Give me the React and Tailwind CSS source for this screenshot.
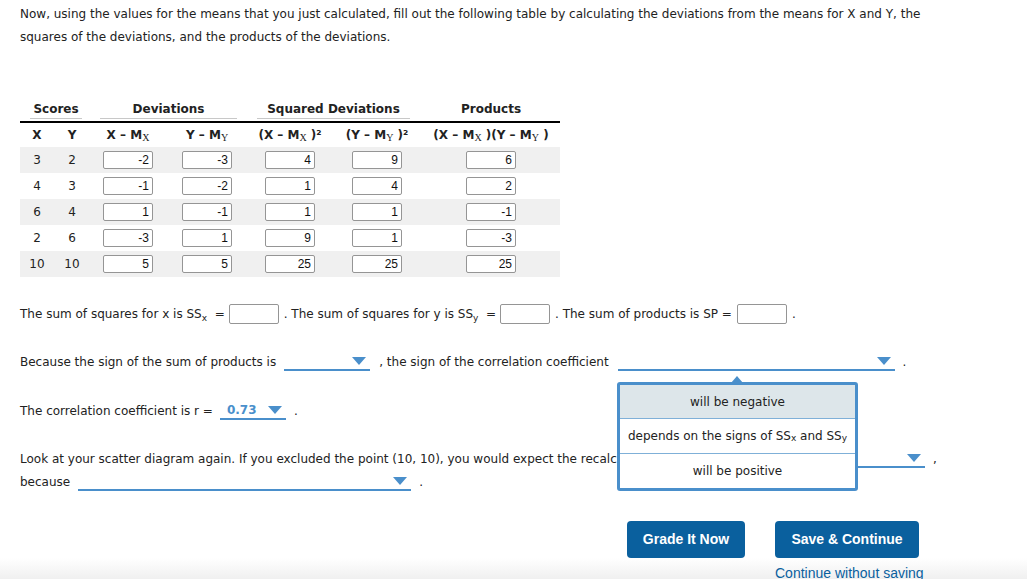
// Correlation worksheet - deviations table with dropdown answers

const BLUE = 'border-[#4a8fcb]';

const rows = [
  { x: 3, y: 2, dx: '-2', dy: '-3', sx: '4', sy: '9', p: '6' },
  { x: 4, y: 3, dx: '-1', dy: '-2', sx: '1', sy: '4', p: '2' },
  { x: 6, y: 4, dx: '1', dy: '-1', sx: '1', sy: '1', p: '-1' },
  { x: 2, y: 6, dx: '-3', dy: '1', sx: '9', sy: '1', p: '-3' },
  { x: 10, y: 10, dx: '5', dy: '5', sx: '25', sy: '25', p: '25' },
];

const GRID = 'grid grid-cols-[34px_36px_76px_82px_84px_90px_138px] w-[540px]';

function Arrow() {
  return (
    <svg width="14" height="8" viewBox="0 0 14 8" className="absolute right-[4px] top-1/2 -translate-y-1/2">
      <polygon points="0,0 14,0 7,8" fill="#4a8fcb" />
    </svg>
  );
}

function Drop({ className = '', children }) {
  return (
    <span className={`relative flex h-full items-center border-b-2 ${BLUE} ${className}`}>
      {children}
      <Arrow />
    </span>
  );
}

function Box({ value = '', className = '' }) {
  return (
    <input
      readOnly
      value={value}
      className={`h-[18px] w-[50px] rounded-[2px] border border-[#959595] bg-white pr-[3px] text-right font-['Liberation_Sans',Arial,sans-serif] text-[12px] text-[#111] outline-none ${className}`}
    />
  );
}

function MSub({ v }) {
  return (
    <>
      M<span className="relative top-[2px] font-['Liberation_Serif',serif] text-[10px] font-normal">{v}</span>
    </>
  );
}

function Sub({ v }) {
  return <span className="relative top-[3px] text-[9px]">{v}</span>;
}

export default function App() {
  return (
    <div className="relative flex h-[579px] w-[1027px] flex-col overflow-hidden bg-white font-['DejaVu_Sans',Verdana,sans-serif] text-[12px] text-[#222]">
      <div className="flex flex-col px-[20px] pt-[3px]">
        {/* Intro */}
        <p className="leading-[23px]">
          <span className="block whitespace-nowrap">
            Now, using the values for the means that you just calculated, fill out the following table by calculating the deviations from the means for X and Y, the
          </span>
          <span className="block whitespace-nowrap">squares of the deviations, and the products of the deviations.</span>
        </p>

        {/* Table */}
        <div className="mt-[50px] flex flex-col">
          <div className={GRID}>
            <div className="col-span-2 ml-[10px] mr-[8px] flex h-[20px] items-center justify-center border-b border-[#c8c8c8] font-bold">Scores</div>
            <div className="col-span-2 ml-[10px] mr-[11px] flex h-[20px] items-center justify-center border-b border-[#c8c8c8] font-bold">Deviations</div>
            <div className="col-span-2 ml-[9px] mr-[12px] flex h-[20px] items-center justify-center border-b border-[#c8c8c8] font-bold">Squared Deviations</div>
            <div className="flex h-[20px] items-center justify-center font-bold">Products</div>
          </div>
          <div className="mt-[2px] h-[2px] w-[540px] bg-black" />
          <div className={`${GRID} h-[24px] items-center text-center font-bold whitespace-nowrap`}>
            <div>X</div>
            <div>Y</div>
            <div>X – <MSub v="X" /></div>
            <div>Y – <MSub v="Y" /></div>
            <div>(X – <MSub v="X" /> )²</div>
            <div>(Y – <MSub v="Y" /> )²</div>
            <div>(X – <MSub v="X" /> )(Y – <MSub v="Y" /> )</div>
          </div>
          {rows.map((r, i) => (
            <div key={i} className={`${GRID} h-[26px] items-center text-center ${i % 2 === 0 ? 'bg-[#f0f0f0]' : 'bg-white'}`}>
              <div>{r.x}</div>
              <div>{r.y}</div>
              <div className="flex justify-center"><Box value={r.dx} /></div>
              <div className="flex justify-center"><Box value={r.dy} /></div>
              <div className="flex justify-center"><Box value={r.sx} /></div>
              <div className="flex justify-center"><Box value={r.sy} /></div>
              <div className="flex justify-center"><Box value={r.p} /></div>
            </div>
          ))}
        </div>

        {/* Sums */}
        <div className="mt-[27px] flex h-[20px] items-center whitespace-nowrap">
          <span>The sum of squares for x is SS<Sub v="x" /> &nbsp;=</span>
          <Box className="ml-[4px] h-[20px]" />
          <span className="ml-[5px]">. The sum of squares for y is SS<Sub v="y" /> &nbsp;=</span>
          <Box className="ml-[4px] h-[20px]" />
          <span className="ml-[5px]">. The sum of products is SP =</span>
          <Box className="ml-[5px] h-[20px]" />
          <span className="ml-[5px]">.</span>
        </div>

        {/* Sign questions */}
        <div className="mt-[29px] flex h-[18px] items-center whitespace-nowrap">
          <span>Because the sign of the sum of products is</span>
          <Drop className="ml-[8px] w-[86px]" />
          <span className="ml-[9px]">, the sign of the correlation coefficient</span>
          <Drop className="ml-[9px] w-[277px]" />
          <span className="ml-[8px]">.</span>
        </div>

        <div className="mt-[30px] flex h-[19px] items-center whitespace-nowrap">
          <span>The correlation coefficient is r =</span>
          <Drop className="ml-[7px] w-[66px]">
            <span className="ml-[7px] font-bold text-[#4a8fcb]">0.73</span>
          </Drop>
          <span className="ml-[8px]">.</span>
        </div>

        <div className="mt-[30px] flex h-[18px] items-center whitespace-nowrap">
          <div className="flex h-full w-[905px] items-center">
            <span className="shrink-0">
              Look at your scatter diagram again. If you excluded the point (10, 10), you would expect the recalculated correlation coefficient
            </span>
            <Drop className="ml-[8px] flex-1" />
          </div>
          <span className="ml-[8px]">,</span>
        </div>

        <div className="mt-[5px] flex h-[18px] items-center whitespace-nowrap">
          <span>because</span>
          <Drop className="ml-[8px] w-[333px]" />
          <span className="ml-[8px]">.</span>
        </div>

        {/* Actions */}
        <div className="ml-[607px] mt-[30px] flex gap-[30px] font-['Liberation_Sans',Arial,sans-serif]">
          <button className="flex h-[37px] w-[118px] items-center justify-center rounded-[4px] bg-[#0a609e] text-[14px] font-bold text-white">
            Grade It Now
          </button>
          <button className="flex h-[37px] w-[144px] items-center justify-center rounded-[4px] bg-[#0a609e] text-[14px] font-bold text-white">
            Save &amp; Continue
          </button>
        </div>
      </div>

      <div className="flex h-[22px] w-full bg-linear-to-b from-white to-[#efefef] pl-[775px] pt-[7px] font-['Liberation_Sans',Arial,sans-serif] text-[14px] leading-[16px] text-[#0a609e]">
        Continue without saving
      </div>

      {/* Open dropdown menu */}
      <div className={`absolute left-[617px] top-[382px] w-[241px] rounded-[3px] border-[3px] ${BLUE} bg-white`}>
        <svg width="12" height="7" viewBox="0 0 12 7" className="absolute -top-[9px] left-[111px]">
          <polygon points="0,7 6,0 12,7" fill="#4a8fcb" />
        </svg>
        <div className="flex flex-col divide-y divide-[#7fb0d8] text-center">
          <div className="flex h-[34px] items-center justify-center bg-[#dde6ea]">will be negative</div>
          <div className="flex h-[35px] items-center justify-center whitespace-nowrap">
            depends on the signs of SS<Sub v="x" />&nbsp;and SS<Sub v="y" />
          </div>
          <div className="flex h-[34px] items-center justify-center">will be positive</div>
        </div>
      </div>
    </div>
  );
}
